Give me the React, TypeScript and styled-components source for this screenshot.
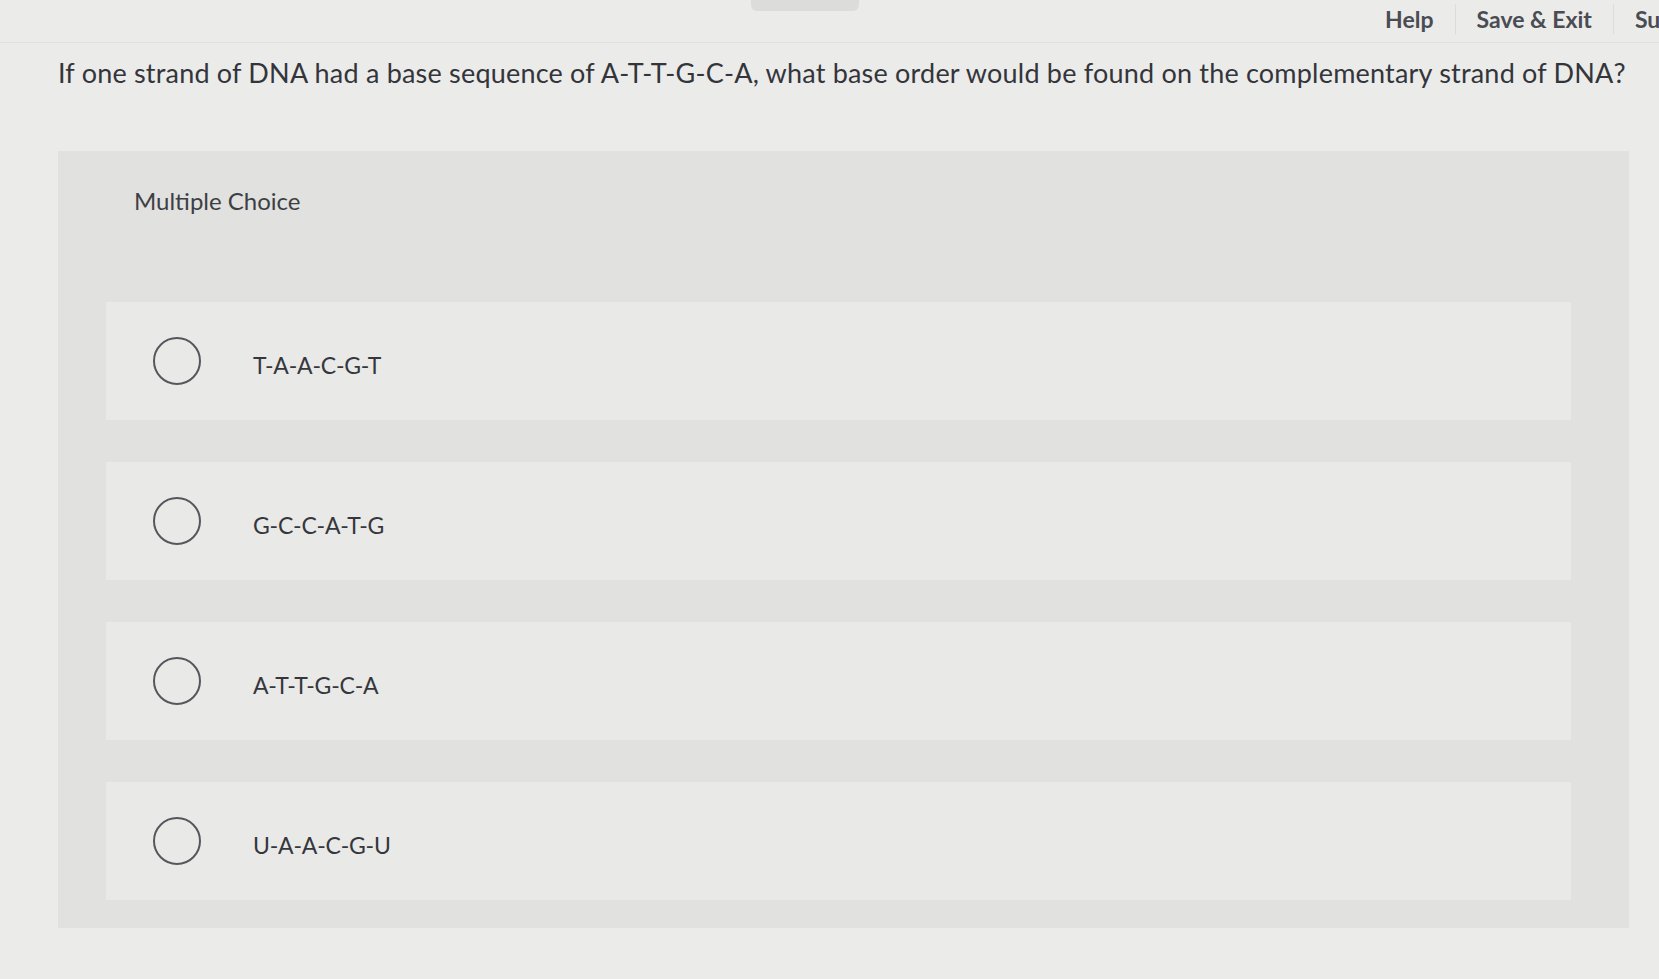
import styled, { createGlobalStyle } from 'styled-components';

const GlobalStyle = createGlobalStyle`
  html, body {
    margin: 0;
    padding: 0;
    background: #ebebe9;
    overflow: hidden;
  }
  body {
    font-family: Lato, "Open Sans", "Liberation Sans", sans-serif;
    color: #35373d;
  }
`;

const Page = styled.div`
  width: 1659px;
  height: 979px;
  overflow: hidden;
  position: relative;
`;

const TopBar = styled.header`
  height: 42px;
  display: flex;
  justify-content: flex-end;
  align-items: center;
  border-bottom: 1px solid #e0e0de;
  position: relative;
`;

const Tab = styled.div`
  position: absolute;
  top: 0;
  left: 751px;
  width: 108px;
  height: 11px;
  background: #dcdcda;
  border-radius: 0 0 6px 6px;
`;

const Nav = styled.nav`
  display: flex;
  align-items: center;
  margin-right: -69px;
  margin-top: -4px;
`;

const NavItem = styled.a`
  font-size: 23px;
  font-weight: 700;
  color: #4a4c53;
  padding: 0 21px;
  line-height: 30px;
  border-left: ${p => (p.$divider ? '1px solid #dcdcda' : 'none')};
  white-space: nowrap;
`;

const Main = styled.main`
  padding: 0 30px 0 58px;
`;

const Question = styled.h1`
  margin: 14px 0 0;
  font-size: 27px;
  font-weight: 400;
  letter-spacing: 0.2px;
  line-height: 32px;
  color: #33353b;
  white-space: nowrap;
`;

const Panel = styled.section`
  margin-top: 62px;
  background: #e1e1df;
  padding: 36px 58px 28px 48px;
`;

const PanelLabel = styled.div`
  font-size: 24px;
  color: #3d3f45;
  margin-left: 28px;
  line-height: 28px;
`;

const OptionList = styled.ul`
  list-style: none;
  margin: 87px 0 0;
  padding: 0;
  display: flex;
  flex-direction: column;
  gap: 42px;
`;

const Option = styled.li`
  height: 118px;
  background: #e9e9e7;
  display: flex;
  align-items: center;
  padding-left: 47px;
  gap: 52px;
`;

const Radio = styled.span`
  width: 44px;
  height: 44px;
  border-radius: 50%;
  border: 2px solid #55575d;
  flex-shrink: 0;
`;

const OptionText = styled.span`
  font-size: 23px;
  color: #35373d;
  padding-top: 8px;
  letter-spacing: -0.2px;
`;

const options = ['T-A-A-C-G-T', 'G-C-C-A-T-G', 'A-T-T-G-C-A', 'U-A-A-C-G-U'];

export default function App() {
  return (
    <Page>
      <GlobalStyle />
      <TopBar>
        <Tab />
        <Nav>
          <NavItem>Help</NavItem>
          <NavItem $divider>Save &amp; Exit</NavItem>
          <NavItem $divider>Submit</NavItem>
        </Nav>
      </TopBar>
      <Main>
        <Question>
          If one strand of DNA had a base sequence of A-T-T-G-C-A, what base order would be found on the complementary strand of DNA?
        </Question>
        <Panel>
          <PanelLabel>Multiple Choice</PanelLabel>
          <OptionList>
            {options.map(o => (
              <Option key={o}>
                <Radio />
                <OptionText>{o}</OptionText>
              </Option>
            ))}
          </OptionList>
        </Panel>
      </Main>
    </Page>
  );
}
